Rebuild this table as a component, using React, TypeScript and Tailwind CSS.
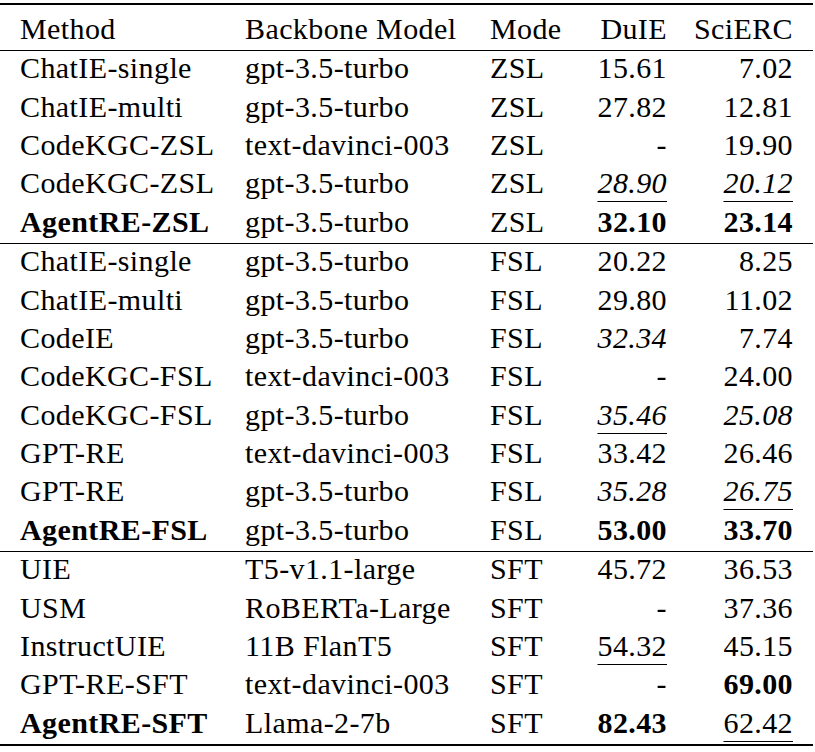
import React from "react";

type Cell = { t: string; b?: boolean; i?: boolean; u?: boolean };
type Row = { m: string; mb?: boolean; bb: string; mode: string; d: Cell; s: Cell };

const zsl: Row[] = [
  { m: "ChatIE-single", bb: "gpt-3.5-turbo", mode: "ZSL", d: { t: "15.61" }, s: { t: "7.02" } },
  { m: "ChatIE-multi", bb: "gpt-3.5-turbo", mode: "ZSL", d: { t: "27.82" }, s: { t: "12.81" } },
  { m: "CodeKGC-ZSL", bb: "text-davinci-003", mode: "ZSL", d: { t: "-" }, s: { t: "19.90" } },
  { m: "CodeKGC-ZSL", bb: "gpt-3.5-turbo", mode: "ZSL", d: { t: "28.90", i: true, u: true }, s: { t: "20.12", i: true, u: true } },
  { m: "AgentRE-ZSL", mb: true, bb: "gpt-3.5-turbo", mode: "ZSL", d: { t: "32.10", b: true }, s: { t: "23.14", b: true } },
];
const fsl: Row[] = [
  { m: "ChatIE-single", bb: "gpt-3.5-turbo", mode: "FSL", d: { t: "20.22" }, s: { t: "8.25" } },
  { m: "ChatIE-multi", bb: "gpt-3.5-turbo", mode: "FSL", d: { t: "29.80" }, s: { t: "11.02" } },
  { m: "CodeIE", bb: "gpt-3.5-turbo", mode: "FSL", d: { t: "32.34", i: true }, s: { t: "7.74" } },
  { m: "CodeKGC-FSL", bb: "text-davinci-003", mode: "FSL", d: { t: "-" }, s: { t: "24.00" } },
  { m: "CodeKGC-FSL", bb: "gpt-3.5-turbo", mode: "FSL", d: { t: "35.46", i: true, u: true }, s: { t: "25.08", i: true } },
  { m: "GPT-RE", bb: "text-davinci-003", mode: "FSL", d: { t: "33.42" }, s: { t: "26.46" } },
  { m: "GPT-RE", bb: "gpt-3.5-turbo", mode: "FSL", d: { t: "35.28", i: true }, s: { t: "26.75", i: true, u: true } },
  { m: "AgentRE-FSL", mb: true, bb: "gpt-3.5-turbo", mode: "FSL", d: { t: "53.00", b: true }, s: { t: "33.70", b: true } },
];
const sft: Row[] = [
  { m: "UIE", bb: "T5-v1.1-large", mode: "SFT", d: { t: "45.72" }, s: { t: "36.53" } },
  { m: "USM", bb: "RoBERTa-Large", mode: "SFT", d: { t: "-" }, s: { t: "37.36" } },
  { m: "InstructUIE", bb: "11B FlanT5", mode: "SFT", d: { t: "54.32", u: true }, s: { t: "45.15" } },
  { m: "GPT-RE-SFT", bb: "text-davinci-003", mode: "SFT", d: { t: "-" }, s: { t: "69.00", b: true } },
  { m: "AgentRE-SFT", mb: true, bb: "Llama-2-7b", mode: "SFT", d: { t: "82.43", b: true }, s: { t: "62.42", u: true } },
];

const grid = "grid grid-cols-[225px_245px_80px_97px_126px] px-[20px] items-center";

function Num({ c }: { c: Cell }) {
  return (
    <div className="text-right">
      <span
        className={
          (c.b ? "font-bold " : "") +
          (c.i ? "italic " : "") +
          (c.u ? "underline decoration-1 underline-offset-[8px] " : "")
        }
      >
        {c.t}
      </span>
    </div>
  );
}

function Group({ rows, last }: { rows: Row[]; last?: boolean }) {
  return (
    <div className={last ? "" : "border-b border-black"}>
      {rows.map((r, k) => (
        <div key={k} className={grid + " h-[38.4px] pb-[4px]"}>
          <div className={r.mb ? "font-bold" : ""}>{r.m}</div>
          <div>{r.bb}</div>
          <div>{r.mode}</div>
          <Num c={r.d} />
          <Num c={r.s} />
        </div>
      ))}
    </div>
  );
}

export default function App() {
  return (
    <div
      className="w-[815px] h-[752px] bg-white text-black pt-[3px]"
      style={{ fontFamily: '"Liberation Serif", "Times New Roman", serif' }}
    >
      <div className="w-[813px] text-[30px] leading-none tracking-[0.4px] border-t-2 border-b-2 border-black">
        <div className={grid + " h-[46px] pt-[2px] border-b border-black"}>
          <div>Method</div>
          <div>Backbone Model</div>
          <div>Mode</div>
          <div className="text-right">DuIE</div>
          <div className="text-right">SciERC</div>
        </div>
        <Group rows={zsl} />
        <Group rows={fsl} />
        <Group rows={sft} last />
      </div>
    </div>
  );
}
